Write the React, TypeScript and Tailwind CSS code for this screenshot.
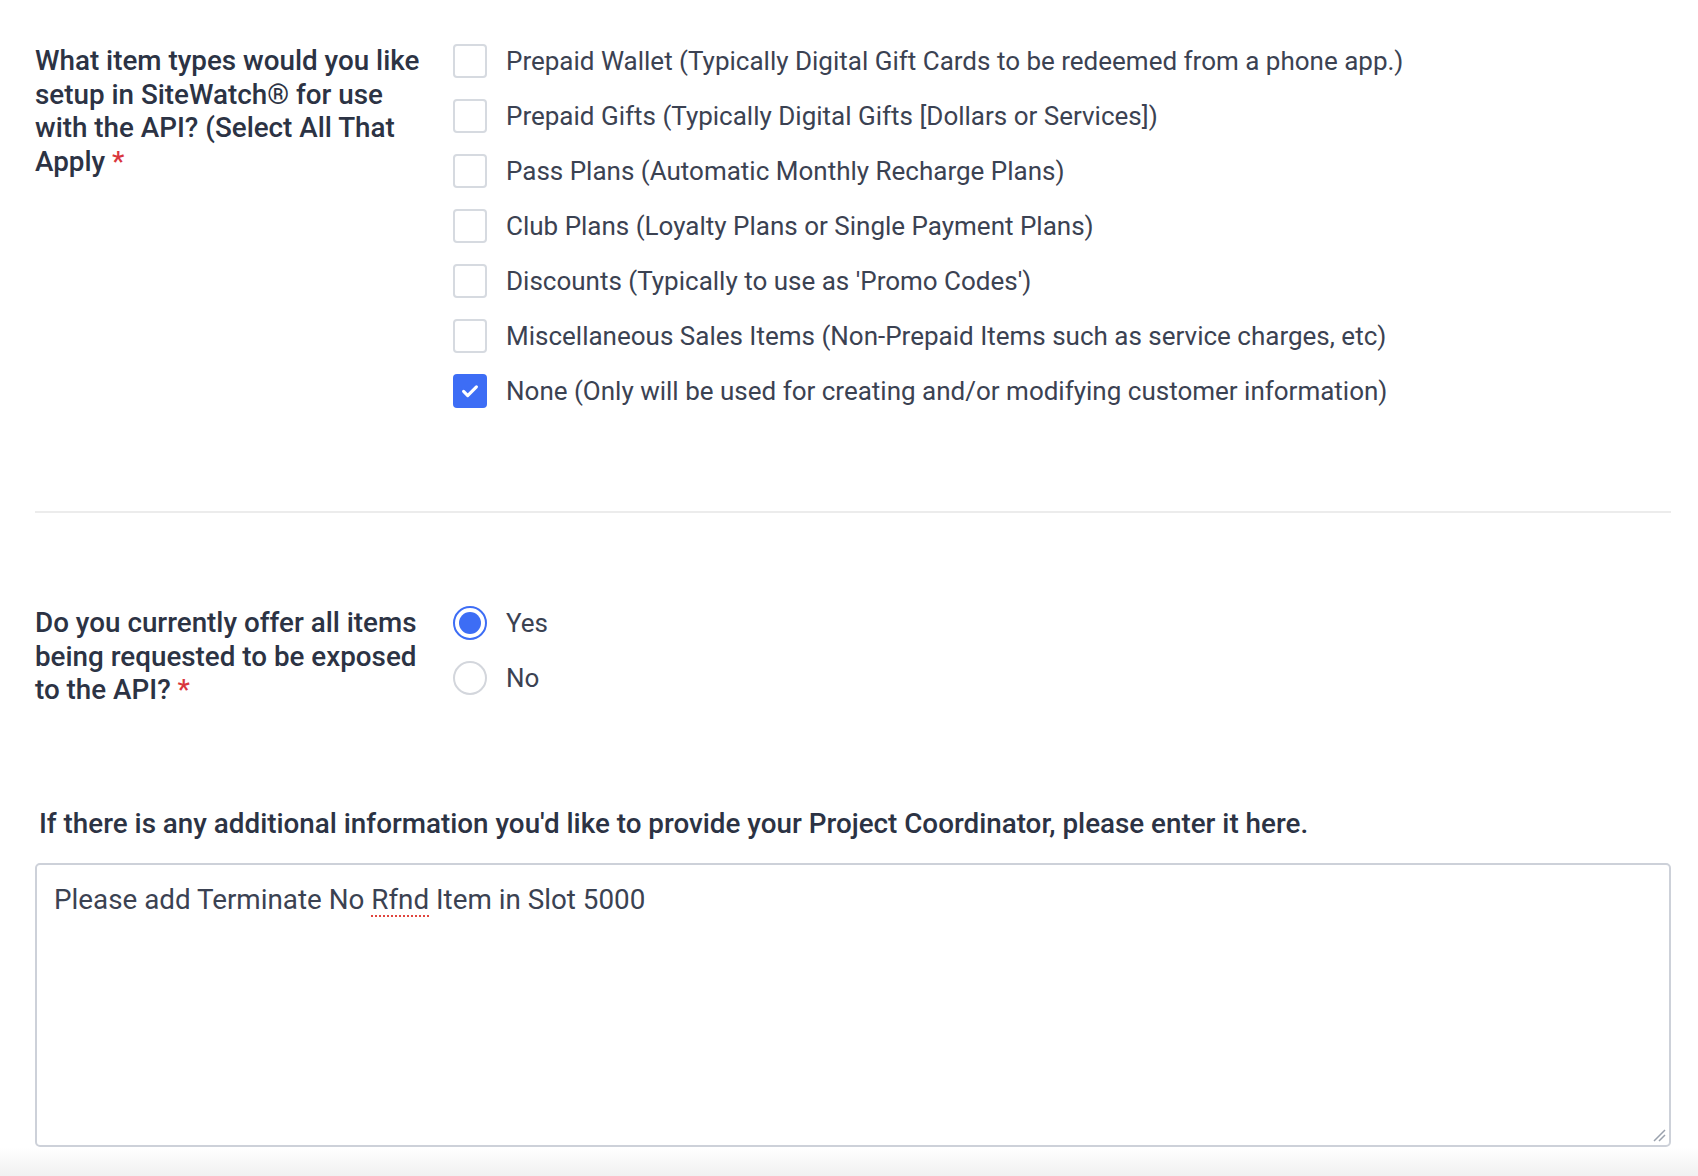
const itemTypes = [
  { label: "Prepaid Wallet (Typically Digital Gift Cards to be redeemed from a phone app.)", checked: false },
  { label: "Prepaid Gifts (Typically Digital Gifts [Dollars or Services])", checked: false },
  { label: "Pass Plans (Automatic Monthly Recharge Plans)", checked: false },
  { label: "Club Plans (Loyalty Plans or Single Payment Plans)", checked: false },
  { label: "Discounts (Typically to use as 'Promo Codes')", checked: false },
  { label: "Miscellaneous Sales Items (Non-Prepaid Items such as service charges, etc)", checked: false },
  { label: "None (Only will be used for creating and/or modifying customer information)", checked: true },
];

function Checkbox({ checked }: { checked: boolean }) {
  if (checked) {
    return (
      <span className="flex h-[34px] w-[34px] shrink-0 items-center justify-center rounded-[4px] bg-[#3d6df5]">
        <svg width="22" height="22" viewBox="0 0 24 24" fill="none" stroke="white" strokeWidth="3.4" strokeLinecap="round" strokeLinejoin="round">
          <path d="M5 12.5l4.5 4.5L19 7.5" />
        </svg>
      </span>
    );
  }
  return <span className="h-[34px] w-[34px] shrink-0 rounded-[4px] border-2 border-[#d6dae0] bg-white" />;
}

function Radio({ checked }: { checked: boolean }) {
  if (checked) {
    return (
      <span className="flex h-[34px] w-[34px] shrink-0 items-center justify-center rounded-full border-2 border-[#3d6df5] bg-white">
        <span className="h-[22px] w-[22px] rounded-full bg-[#3d6df5]" />
      </span>
    );
  }
  return <span className="h-[34px] w-[34px] shrink-0 rounded-full border-2 border-[#d3d6dc] bg-white" />;
}

function Question({ children }: { children: React.ReactNode }) {
  return (
    <div className="w-[400px] shrink-0 text-[27.8px] font-medium leading-[33.5px] text-[#2c3344]">
      {children} <span className="text-[#d9363e]">*</span>
    </div>
  );
}

export default function App() {
  return (
    <div className="min-h-[1176px] bg-white" style={{ fontFamily: "Roboto, 'Liberation Sans', sans-serif" }}>
      <div className="pl-[35px] pr-[27px] pt-[44px]">
        <div className="flex gap-[18px]">
          <Question>What item types would you like setup in SiteWatch® for use with the API? (Select All That Apply</Question>
          <div className="flex flex-col gap-[21px]">
            {itemTypes.map((item) => (
              <label key={item.label} className="flex items-center gap-[19px] text-[26px] leading-[34px] text-[#3b4252]">
                <Checkbox checked={item.checked} />
                <span>{item.label}</span>
              </label>
            ))}
          </div>
        </div>

        <div className="mt-[103px] h-[2px] bg-[#ececec]" />

        <div className="mt-[93px] flex gap-[18px]">
          <Question>Do you currently offer all items being requested to be exposed to the API?</Question>
          <div className="flex flex-col gap-[21px]">
            <label className="flex items-center gap-[19px] text-[26px] leading-[34px] text-[#3b4252]">
              <Radio checked />
              <span>Yes</span>
            </label>
            <label className="flex items-center gap-[19px] text-[26px] leading-[34px] text-[#3b4252]">
              <Radio checked={false} />
              <span>No</span>
            </label>
          </div>
        </div>

        <p className="mt-[100px] pl-[4px] text-[27.8px] font-medium leading-[34px] text-[#2c3344]">
          If there is any additional information you'd like to provide your Project Coordinator, please enter it here.
        </p>

        <div className="relative mt-[22px] h-[284px] rounded-[5px] border-2 border-[#cdd1d9] bg-white px-[17px] pt-[17px] text-[27.8px] leading-[36px] text-[#3b4252]">
          Please add Terminate No{" "}
          <span className="underline decoration-[#e0453f] decoration-dotted decoration-2 underline-offset-[7px]">Rfnd</span> Item in
          Slot 5000
          <svg className="absolute bottom-[3px] right-[3px]" width="14" height="14" viewBox="0 0 14 14" stroke="#9aa1ad" strokeWidth="1.5">
            <path d="M2 13L13 2M7 13L13 7" />
          </svg>
        </div>
      </div>
      <div className="h-[29px] bg-gradient-to-b from-white to-[#f1f1f1]" />
    </div>
  );
}
